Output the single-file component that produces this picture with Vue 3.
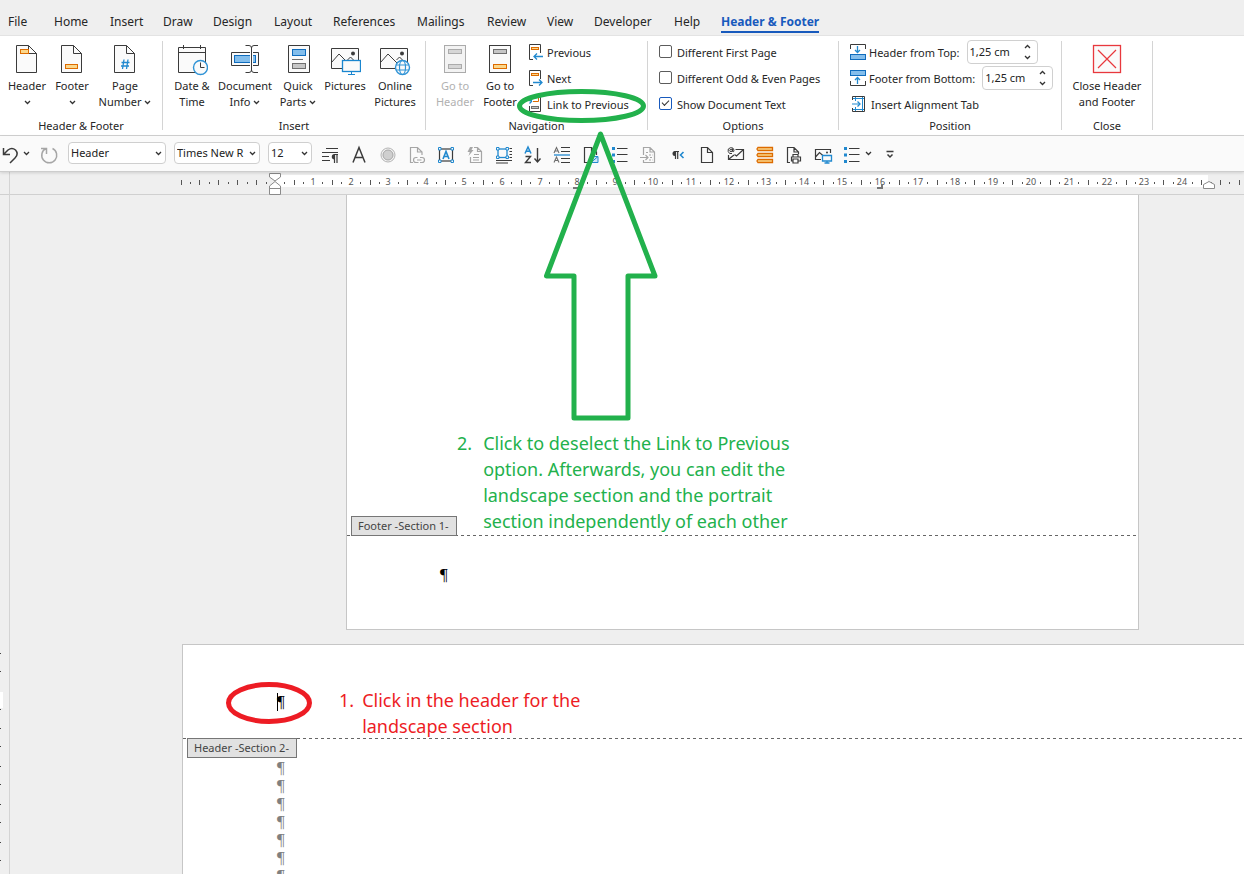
<script setup>
import { ref } from 'vue'

const tabs = [
  'File', 'Home', 'Insert', 'Draw', 'Design', 'Layout', 'References',
  'Mailings', 'Review', 'View', 'Developer', 'Help', 'Header & Footer'
]

const dark = 'fill="#fafafa" stroke="#3b3b3b"'
const none = 'fill="none"'
const blueBox = 'fill="#83beec" stroke="#0f6cbd"'
const orangeBox = 'fill="#fbd78b" stroke="#dd6b00"'
const sheet = `<path ${dark} d="M5.5 1.5H17.5L25.5 9.5V28.5H5.5Z"/><path ${none} stroke="#3b3b3b" d="M17.5 1.5V9.5H25.5"/>`
const photo = (x) => `<path ${dark} d="M${x} 4.5h27v20h-27z"/><path ${none} stroke="#3b3b3b" d="M${x} 18.5l7.5-8.5 9 9M${x + 16} 16l3-3 4 4"/><circle cx="${x + 21.5}" cy="9.5" r="2" fill="#3b3b3b"/>`
const goTo = (edge, fill, topBox, bottomBox) =>
  `<rect x="5.5" y="1.5" width="21" height="27" fill="${fill}" stroke="${edge}"/><rect x="9.5" y="5.5" width="13" height="4" ${topBox}/><rect x="9.5" y="20.5" width="13" height="4" ${bottomBox}/>`
const greyBox = 'fill="#c6c6c6" stroke="#6e6e6e"'
const paleBox = 'fill="#d6d6d6" stroke="#ababab"'

const large = {
  header: `${sheet}<rect x="9.5" y="5.5" width="8" height="4" ${orangeBox}/>`,
  footer: `${sheet}<rect x="9.5" y="20.5" width="12" height="4" ${orangeBox}/>`,
  pageNumber: `${sheet}<path ${none} stroke="#2189cf" stroke-width="1.3" d="M15 15.5L13.5 25M19 15.5L17.5 25M12.5 18.5H20.5M12 22H20"/>`,
  date: `<path ${dark} d="M2.5 3.5h27v25h-27z"/><path ${none} stroke="#3b3b3b" d="M2.5 8.5h27M7.5 1v4M24.5 1v4"/><circle cx="24.5" cy="23.5" r="7" fill="#fafafa" stroke="#2f93d6" stroke-width="1.4"/><path ${none} stroke="#3b3b3b" d="M24.5 18.5v5h4"/>`,
  docInfo: `<path ${dark} d="M2.5 8.5h27v13h-27z"/><rect x="5.5" y="11.5" width="21" height="7" ${blueBox}/><path fill="none" stroke="#fff" stroke-width="3" d="M22.5 4v22"/><path ${none} stroke="#3b3b3b" d="M16.5 1.5h3.5q2.5 0 2.5 2.5V26q0 2.5-2.5 2.5H16.5M29 1.5h-4q-2.5 0-2.5 2.5M29 28.5h-4q-2.5 0-2.5-2.5"/>`,
  quick: `<path ${dark} d="M6.5 1.5h21v27h-21z"/><rect x="10.5" y="5.5" width="13" height="6" ${blueBox}/><path ${none} stroke="#6e6e6e" d="M10 15.5h11"/><rect x="10.5" y="19.5" width="13" height="5" ${greyBox}/>`,
  pictures: `${photo(2.5)}<rect x="13.5" y="16.5" width="18" height="11" fill="#fafafa" stroke="#1a86cf" stroke-width="1.3"/><path ${none} stroke="#1a86cf" d="M22.5 27.5v3M19 30.5h7"/>`,
  online: `${photo(1.5)}<circle cx="23.5" cy="23.5" r="7" fill="#fafafa" stroke="#2f93d6" stroke-width="1.4"/><ellipse cx="23.5" cy="23.5" rx="3" ry="7" ${none} stroke="#2f93d6" stroke-width="1.2"/><path ${none} stroke="#2f93d6" stroke-width="1.2" d="M17 21h13M17 26h13"/>`,
  goHeader: goTo('#ababab', '#f3f3f3', paleBox, paleBox),
  goFooter: goTo('#3b3b3b', '#fafafa', greyBox, orangeBox),
  close: `<rect x="2.5" y="1.5" width="27" height="27" fill="#fafafa" stroke="#e8383d" stroke-width="1.3"/><path ${none} stroke="#e8383d" stroke-width="1.2" d="M7 6L25 24M25 6L7 24"/>`
}

const small = {
  previous: `<path ${none} stroke="#3b3b3b" d="M4 15.5H.5V.5H11.5V9"/><rect x="2.5" y="3.5" width="7" height="2" ${orangeBox}/><path ${none} stroke="#2189cf" stroke-width="1.3" d="M14 12.5H5M8 9.5L5 12.5L8 15.5"/>`,
  next: `<path ${none} stroke="#3b3b3b" d="M4 15.5H.5V.5H11.5V9"/><rect x="2.5" y="3.5" width="7" height="2" ${orangeBox}/><path ${none} stroke="#2189cf" stroke-width="1.3" d="M4 12.5H13M10 9.5L13 12.5L10 15.5"/>`,
  link: `<path ${none} stroke="#3b3b3b" d="M10 .5H11.5V15.5H.5V10"/><path ${none} stroke="#dd6b00" d="M9.5 2V5.5H4"/><rect x="2.5" y="10.5" width="7" height="2" ${greyBox}/><path ${none} stroke="#2189cf" stroke-width="1.3" d="M0 4.5H3M5 1.5H8M.5 7.5L3 5"/>`,
  fromTop: `<path ${none} stroke="#3b3b3b" d="M.5 5V.5H15.5V5"/><rect x=".5" y="10.5" width="15" height="5" ${blueBox}/><path ${none} stroke="#2189cf" stroke-width="1.3" d="M7.5 2V8.5M5 6L7.5 8.5L10 6"/>`,
  fromBottom: `<path ${none} stroke="#3b3b3b" d="M.5 11V15.5H15.5V11"/><rect x=".5" y=".5" width="15" height="5" ${blueBox}/><path ${none} stroke="#2189cf" stroke-width="1.3" d="M7.5 14V7.5M5 10L7.5 7.5L10 10"/>`,
  align: `<path ${none} stroke="#3b3b3b" d="M2.5 4V.5H14.5V15.5H2.5V12"/><path ${none} stroke="#2189cf" d="M5.5 1V5M5.5 11V15M12.5 1V15M3 2.5H14M3 13.5H14M2 8H10"/><path ${none} stroke="#2189cf" stroke-width="1.3" d="M7.5 5.5L10 8L7.5 10.5"/>`
}

const groupInsert = [
  { icon: 'date', lines: ['Date &', 'Time'], size: 'w44' },
  { icon: 'docInfo', lines: ['Document', 'Info'], menu: true, size: 'w62' },
  { icon: 'quick', lines: ['Quick', 'Parts'], menu: true, size: 'w44' },
  { icon: 'pictures', lines: ['Pictures'], size: 'w50' },
  { icon: 'online', lines: ['Online', 'Pictures'], size: 'w50' }
]
const groupHeader = [
  { icon: 'header', lines: ['Header', ''], menu: true, size: 'w44' },
  { icon: 'footer', lines: ['Footer', ''], menu: true, size: 'w46' },
  { icon: 'pageNumber', lines: ['Page', 'Number'], menu: true, size: 'w60' }
]
const groupNav = [
  { icon: 'goHeader', lines: ['Go to', 'Header'], size: 'w46', disabled: true },
  { icon: 'goFooter', lines: ['Go to', 'Footer'], size: 'w44' }
]
const groupClose = [{ icon: 'close', lines: ['Close Header', 'and Footer'], size: 'w90' }]

const largeGroups = { groupHeader, groupInsert, groupNav, groupClose }

const options = ref([
  { label: 'Different First Page', on: false },
  { label: 'Different Odd & Even Pages', on: false },
  { label: 'Show Document Text', on: true }
])

const fromTop = ref('1,25 cm')
const fromBottom = ref('1,25 cm')

const g = 'fill="none" stroke="#3b3b3b" stroke-width="1.2"'
const pale = 'fill="none" stroke="#a6a6a6" stroke-width="1.2"'
const blue = 'fill="none" stroke="#2189cf" stroke-width="1.3"'
const bullets = `<path fill="#2189cf" d="M2 2h3v3H2zM2 8.5h3v3H2zM2 15h3v3H2z"/><path ${g} d="M7 3.5h10.5M7 9.5h10.5M7 16.5h10.5"/>`
const quick = [
  { name: 'Paragraph marks', art: `<path ${g} d="M6 3.5h12M2 7.5h16M2 11.5h7M2 15.5h8"/><path ${g} d="M14.5 9.5H18M14.5 9V18M17 9V18"/><path fill="#3b3b3b" d="M14.5 9a2.7 2.7 0 0 0 0 5.4z"/>` },
  { name: 'Font', art: `<path fill="none" stroke="#3b3b3b" stroke-width="1.5" d="M4 17.5L10 2.5L16 17.5M6 12.5H14"/>` },
  { name: 'Record', art: `<circle cx="10" cy="10" r="7" fill="#f2f2f2" stroke="#b4b4b4"/><circle cx="10" cy="10" r="5" fill="#cfcfcf" stroke="#a6a6a6"/>` },
  { name: 'Link document', art: `<path ${pale} d="M6 17.5H3.5V2.5H10.5L15 7V10M10.5 2.5V7H15"/><path ${pale} d="M10.5 12.5H9a2.5 2.5 0 0 0 0 5H11.5M13 17.5h2a2.5 2.5 0 0 0 0-5H13M10 15h4.5"/>` },
  { name: 'Text box', art: `<rect x="3.5" y="4" width="13" height="12" ${g}/><path fill="#fafafa" stroke="#2189cf" d="M2.5 2.5h2.5v2.5H2.5zM15 2.5h2.5v2.5h-2.5zM2.5 15h2.5v2.5H2.5zM15 15h2.5v2.5h-2.5z"/><path fill="none" stroke="#2189cf" stroke-width="1.6" d="M7 14L10 6.5L13 14M8 11.5h4"/>` },
  { name: 'Quick format', art: `<path ${pale} d="M5.5 12V17.5H16.5V6.5L12.5 2.5H9M12.5 2.5V6.5H16.5M9 9.5h5M8 12.5h6M8 15h6"/><path fill="#a6a6a6" d="M5 2h3L6.5 5H8.5L3.5 11L4.8 7H2.5z"/>` },
  { name: 'Wrap text', art: `<rect x="4" y="4" width="9" height="8.5" ${blue}/><path fill="#fafafa" stroke="#2189cf" d="M2.5 2.5h2.5v2.5H2.5zM12 2.5h2.5v2.5H12zM2.5 11h2.5v2.5H2.5zM12 11h2.5v2.5H12z"/><path ${g} d="M15.5 3.5H18M15.5 6.5H18M15.5 9.5H18M15.5 12.5H18M2 15.5H18M2 18H14"/>` },
  { name: 'Sort', art: `<path fill="none" stroke="#2189cf" stroke-width="1.5" d="M2 8.5L5 2L8 8.5M3 6.3h4"/><path fill="none" stroke="#3b3b3b" stroke-width="1.4" d="M2.5 11.5H7.5L2.5 17.5H8M14.5 3V17M11.5 13.5L14.5 17L17.5 13.5"/>` },
  { name: 'Line spacing', art: `<path fill="none" stroke="#6e6e6e" stroke-width="1.1" d="M2 8L4.5 2.5L7 8M3 6h3M2 17.5L4.5 12L7 17.5M3 15.5h3"/><path ${g} d="M9 2.5h9M9 6.5h9M9 13.5h9M9 17.5h9"/><path ${blue} d="M2 10h16"/>` },
  { name: 'Document preview', art: `<path ${g} d="M9 17.5H3.5V2.5H10.5L15.5 7V10M10.5 2.5V7H15.5"/><path fill="#cfe6f8" stroke="#2189cf" d="M10 11.5h7v6h-7zM10 17.5l7-6"/>` },
  { name: 'List', art: bullets },
  { name: 'Import', art: `<path ${pale} d="M4.5 10V2.5H11L15.5 7V17.5H4.5V15M11 2.5V7H15.5M1 12.5H9M6.5 10L9 12.5L6.5 15"/><path fill="none" stroke="#a6a6a6" stroke-dasharray="2 1.5" d="M7 7.5h3M10 10h4M11 12.5h3M10 15h4"/>` },
  { name: 'Right-to-left', art: `<path fill="#3b3b3b" d="M7 6a2.5 2.5 0 0 0 0 5z"/><path ${g} d="M6.5 6.5h4.5M7.5 6V14M9.7 6V14"/><path fill="none" stroke="#2189cf" stroke-width="1.6" d="M15.5 7L12.5 10L15.5 13"/>` },
  { name: 'New', art: `<path ${g} d="M4.5 2.5H10.5L15.5 7.5V17.5H4.5ZM10.5 2.5V7.5H15.5"/>` },
  { name: 'Email', art: `<path ${g} d="M9.5 4.5H17.5V14.5H2.5V10M17.5 4.5L10.5 11L8.5 9.5M3 14L8 10"/><path fill="none" stroke="#3b3b3b" d="M6.5 3.5V6.5Q8 7.5 8 5A3 3 0 1 0 6 8.5"/><circle cx="5" cy="5.5" r="1.2" fill="none" stroke="#3b3b3b"/>` },
  { name: 'Shading', art: `<path ${orangeBox} stroke-width="1.3" d="M3 2.5h14.5v3H3l-1-1.5zM3 8.5h14.5v3H3l-1-1.5zM3 14.5h14.5v3H3l-1-1.5z"/>` },
  { name: 'Print', art: `<path ${g} d="M6 17.5H3.5V2.5H10L14.5 7V9M10 2.5V7H14.5M9 12V9.5H14V12M9 16H7.5V12H16.5V16H14M9 14H14V18H9Z"/>` },
  { name: 'Picture', art: `<path ${g} d="M8 14.5H2.5V4.5H17.5V8M2.5 12L6.5 7.5L11 11.5"/><circle cx="14" cy="7.5" r="1" fill="#3b3b3b"/><path fill="#fafafa" stroke="#2189cf" stroke-width="1.3" d="M9.5 10.5H18.5V16H9.5ZM14 16V18M11.5 18H16.5"/>` },
  { name: 'Bullets', art: bullets }
]

/* Horizontal ruler: one centimetre spans 37.8 units, zero sits at 275. */
const cm = 37.8
const zero = 275
const marks = []
for (let q = -10; q <= 102; q++) {
  const x = Math.round(zero + (q * cm) / 4)
  if (q === 0) continue
  if (q % 4 === 0 && q > 0 && q / 4 <= 24) marks.push({ x, kind: 'number', value: q / 4 })
  else if (q % 2 === 0) marks.push({ x, kind: 'line' })
  else marks.push({ x, kind: 'dot' })
}
const sideTicks = [653, 671, 709, 728, 746, 766, 784, 804, 822, 842, 860].map((y) => y - 195)
</script>

<template>
  <div class="window">
    <nav class="tabs" aria-label="Ribbon tabs">
      <button v-for="t in tabs" :key="t" type="button" :class="['tab', { active: t === 'Header & Footer' }]">{{ t }}</button>
    </nav>

    <section class="ribbon">
      <template v-for="(items, key) in largeGroups" :key="key">
        <template v-if="key === 'groupClose'">
          <div class="group options">
            <div class="body stack">
              <label v-for="o in options" :key="o.label" class="check"><input v-model="o.on" type="checkbox" />{{ o.label }}</label>
            </div>
            <div class="caption">Options</div>
          </div>
          <div class="group position">
            <div class="body stack">
              <div class="row">
                <svg class="mini" viewBox="0 0 16 16" v-html="small.fromTop"></svg>
                <label for="from-top">Header from Top:</label>
                <span class="spin">
                  <input id="from-top" v-model="fromTop" type="text" />
                  <span class="steps">
                    <button type="button" aria-label="Increase header distance"><svg viewBox="0 0 7 5"><path d="M1 4L3.5 1.5L6 4" /></svg></button>
                    <button type="button" aria-label="Decrease header distance"><svg viewBox="0 0 7 5"><path d="M1 1L3.5 3.5L6 1" /></svg></button>
                  </span>
                </span>
              </div>
              <div class="row">
                <svg class="mini" viewBox="0 0 16 16" v-html="small.fromBottom"></svg>
                <label for="from-bottom">Footer from Bottom:</label>
                <span class="spin">
                  <input id="from-bottom" v-model="fromBottom" type="text" />
                  <span class="steps">
                    <button type="button" aria-label="Increase footer distance"><svg viewBox="0 0 7 5"><path d="M1 4L3.5 1.5L6 4" /></svg></button>
                    <button type="button" aria-label="Decrease footer distance"><svg viewBox="0 0 7 5"><path d="M1 1L3.5 3.5L6 1" /></svg></button>
                  </span>
                </span>
              </div>
              <button type="button" class="row"><svg class="mini" viewBox="0 0 16 16" v-html="small.align"></svg><span class="indent">Insert Alignment Tab</span></button>
            </div>
            <div class="caption">Position</div>
          </div>
        </template>
        <div :class="['group', key]">
          <div class="body">
            <button v-for="b in items" :key="b.icon" type="button" :class="['large', b.size]" :disabled="b.disabled">
              <svg class="icon" viewBox="0 0 32 32" v-html="large[b.icon]"></svg>
              <span v-for="(line, i) in b.lines" :key="i" class="line">{{ line }}<svg v-if="b.menu && i === 1" class="chev" viewBox="0 0 7 5"><path d="M1 1L3.5 3.5L6 1" /></svg></span>
            </button>
            <div v-if="key === 'groupNav'" class="stack nav">
              <button type="button" class="row"><svg class="mini" viewBox="0 0 16 16" v-html="small.previous"></svg><span>Previous</span></button>
              <button type="button" class="row"><svg class="mini" viewBox="0 0 16 16" v-html="small.next"></svg><span>Next</span></button>
              <button type="button" class="row"><svg class="mini" viewBox="0 0 16 16" v-html="small.link"></svg><span>Link to Previous</span></button>
            </div>
          </div>
          <div class="caption">{{ { groupHeader: 'Header & Footer', groupInsert: 'Insert', groupNav: 'Navigation', groupClose: 'Close' }[key] }}</div>
        </div>
      </template>
    </section>

    <section class="quickbar">
      <button type="button" class="undo" aria-label="Undo"><svg viewBox="0 0 20 20"><path d="M3.5 3V9.5H10M3.5 9.5L8 5Q12 2 15.5 5Q19 9 15 13L10 18" /></svg></button>
      <button type="button" class="drop" aria-label="Undo history"><svg class="chev" viewBox="0 0 7 5"><path d="M1 1L3.5 3.5L6 1" /></svg></button>
      <button type="button" class="redo" aria-label="Redo"><svg viewBox="0 0 20 20"><path d="M2 3.5H7.5V9M13.5 3.5A7.5 7.5 0 1 1 7 3.5" /></svg></button>
      <span class="pick style"><select aria-label="Style"><option>Header</option></select><svg class="chev" viewBox="0 0 7 5"><path d="M1 1L3.5 3.5L6 1" /></svg></span>
      <span class="pick font"><select aria-label="Font"><option>Times New R</option></select><svg class="chev" viewBox="0 0 7 5"><path d="M1 1L3.5 3.5L6 1" /></svg></span>
      <span class="pick size"><select aria-label="Font size"><option>12</option></select><svg class="chev" viewBox="0 0 7 5"><path d="M1 1L3.5 3.5L6 1" /></svg></span>
      <button v-for="q in quick" :key="q.name" type="button" class="tool" :aria-label="q.name"><svg viewBox="0 0 20 20" v-html="q.art"></svg></button>
      <button type="button" class="drop bullets-drop" aria-label="Bullet library"><svg class="chev" viewBox="0 0 7 5"><path d="M1 1L3.5 3.5L6 1" /></svg></button>
      <button type="button" class="tool customize" aria-label="Customize toolbar"><svg viewBox="0 0 20 20"><path d="M6.5 6.5H13.5M7.5 9.5L10 12L12.5 9.5" /></svg></button>
    </section>

    <section class="ruler">
      <svg class="scale" height="23" aria-hidden="true">
        <path class="edge" d="M9.5 0V23" />
        <rect x="275" y="3" width="933" height="12" fill="#fff" />
        <template v-for="m in marks" :key="m.x">
          <text v-if="m.kind === 'number'" :x="m.x" y="13">{{ m.value }}</text>
          <rect v-else-if="m.kind === 'line'" :x="m.x" y="8" width="1" height="5" />
          <rect v-else :x="m.x" y="10" width="1" height="2" />
        </template>
        <path class="stop" d="M580 12V16H573M882 12V16H877" />
        <path class="marker" d="M269.5 1.5H280.5V5L275 9L269.5 5ZM269.5 22.5H280.5V14L275 9.5L269.5 14ZM269.5 16.5H280.5" />
        <path class="marker" d="M1203.5 16.5H1214.5V12.5L1209 9.5L1203.5 12.5Z" />
      </svg>
    </section>

    <main class="workspace">
      <div class="side">
        <svg width="9" height="679" aria-hidden="true">
          <rect x="0" y="497" width="3" height="16" fill="#fff" />
          <rect v-for="y in sideTicks" :key="y" x="0" :y="y" width="1" height="1" fill="#444" />
        </svg>
      </div>
      <div class="canvas">
        <article class="page portrait">
          <div class="footer-area">
            <span class="tag">Footer -Section 1-</span>
            <p class="mark">¶</p>
          </div>
        </article>
        <article class="page landscape">
          <div class="header-area"><p class="mark caret">¶</p></div>
          <div class="text-area">
            <span class="tag">Header -Section 2-</span>
            <p v-for="n in 7" :key="n" class="mark grey">¶</p>
          </div>
        </article>
      </div>
    </main>

    <svg class="overlay" aria-hidden="true">
      <ellipse cx="581.5" cy="106" rx="62" ry="14.5" stroke="#22b14c" />
      <path stroke="#22b14c" d="M600.5 134L546.5 276H574V418H628V276H655Z" />
      <ellipse cx="269" cy="703" rx="40.5" ry="18.5" stroke="#ed1c24" />
    </svg>
    <div class="note green">
      <span>2.</span>
      <p>Click to deselect the Link to Previous<br />option. Afterwards, you can edit the<br />landscape section and the portrait<br />section independently of each other</p>
    </div>
    <div class="note red">
      <span>1.</span>
      <p>Click in the header for the<br />landscape section</p>
    </div>
  </div>
</template>

<style>
body {
  margin: 0;
}
</style>

<style scoped>
.window {
  position: relative;
  display: flex;
  flex-direction: column;
  height: 100vh;
  overflow: hidden;
  background: #efefef;
  color: #262626;
  font: 11px/16px "Noto Sans", "Open Sans", sans-serif;
}
button {
  padding: 0;
  border: 0;
  background: none;
  color: inherit;
  font: inherit;
  white-space: nowrap;
}
svg {
  display: block;
  flex: none;
}
p {
  margin: 0;
}
.tabs {
  display: grid;
  grid-template-columns: 46px 56px 53px 50px 61px 59px 84px 70px 60px 47px 80px 47px max-content;
  height: 35px;
  padding-left: 8px;
  border-bottom: 1px solid #e3e3e3;
  font-size: 12px;
}
.tab {
  justify-self: start;
  height: 20px;
  margin-top: 12px;
}
.tab.active {
  color: #185abd;
  font-weight: 700;
  border-bottom: 2px solid #185abd;
  height: 21px;
}
.ribbon {
  display: flex;
  height: 99px;
  background: #fff;
  border-bottom: 1px solid #d2d2d2;
}
.group {
  position: relative;
  display: flex;
  flex-direction: column;
  box-sizing: border-box;
  padding-top: 3px;
}
.group::after {
  content: "";
  position: absolute;
  right: 0;
  top: 5px;
  bottom: 5px;
  width: 1px;
  background: #d4d4d4;
}
.groupHeader { width: 163px; }
.groupInsert { width: 263px; }
.groupNav { width: 222px; }
.options { width: 191px; }
.position { width: 223px; }
.groupClose { width: 91px; }
.groupHeader .body { padding-left: 5px; }
.groupInsert .body { padding-left: 7px; }
.groupNav .body { padding-left: 6px; }
.options .body { padding-left: 11px; }
.position .body { padding-left: 11px; }
.body {
  display: flex;
  height: 78px;
}
.caption {
  height: 18px;
  line-height: 18px;
  padding-right: 1px;
  text-align: center;
}
.large {
  display: flex;
  flex-direction: column;
  align-items: center;
  padding-top: 5px;
}
.large:disabled { color: #b1b1b1; }
.icon {
  width: 32px;
  height: 32px;
  margin-bottom: 2px;
}
.line {
  display: flex;
  align-items: center;
  justify-content: center;
  gap: 3px;
  height: 16px;
}
.w44 { width: 44px; }
.w46 { width: 46px; }
.w50 { width: 50px; }
.w60 { width: 60px; }
.w62 { width: 62px; }
.w90 { width: 90px; }
.chev {
  width: 7px;
  height: 5px;
}
.chev path,
.steps path {
  fill: none;
  stroke: #333;
  stroke-width: 1.3;
}
.stack {
  display: flex;
  flex-direction: column;
}
.nav { padding-left: 7px; }
.row,
.check {
  display: flex;
  align-items: center;
  height: 26px;
  white-space: nowrap;
}
.mini {
  width: 16px;
  height: 16px;
  margin-right: 2px;
}
.row label,
.row > span:not(.spin) { padding-top: 2px; }
.row label { margin-left: 1px; }
.row .indent { margin-left: 3px; }
.check {
  box-sizing: border-box;
  padding-top: 2px;
}
.check input {
  appearance: none;
  display: grid;
  place-items: center;
  box-sizing: border-box;
  width: 13px;
  height: 13px;
  margin: 0 5px 4px 0;
  border: 1px solid #5c5c5c;
  border-radius: 2px;
  background: #fff;
}
.check input:checked { border-color: #185abd; }
.check input:checked::before {
  content: "";
  width: 6px;
  height: 3px;
  margin-bottom: 2px;
  border: solid #333;
  border-width: 0 0 1px 1px;
  transform: rotate(-45deg);
}
.spin {
  display: flex;
  box-sizing: border-box;
  width: 71px;
  height: 24px;
  margin-left: 7px;
  border: 1px solid #d0d0d0;
  border-radius: 4px;
  background: #fff;
}
.spin input {
  box-sizing: border-box;
  width: 56px;
  padding: 0 0 0 2px;
  border: 0;
  background: none;
  color: #222;
  font: inherit;
}
.steps {
  display: flex;
  flex-direction: column;
  justify-content: center;
  gap: 6px;
}
.steps button,
.steps svg {
  display: block;
  width: 7px;
  height: 5px;
}
.quickbar {
  display: flex;
  align-items: center;
  height: 35px;
  background: #fafafa;
  border-bottom: 1px solid #cdcdcd;
  box-shadow: 0 1px 3px #0002;
  z-index: 1;
}
.quickbar button svg:not(.chev) {
  width: 20px;
  height: 20px;
}
.undo path,
.redo path,
.customize path {
  fill: none;
  stroke: #3b3b3b;
  stroke-width: 1.5;
}
.redo path { stroke: #a6a6a6; }
.undo { padding-top: 2px; }
.drop {
  display: flex;
  justify-content: center;
  width: 13px;
}
.redo { padding: 2px 9px 0 6px; }
.pick {
  position: relative;
  height: 22px;
  margin: 0 8px 2px 0;
}
.pick select {
  appearance: none;
  display: block;
  box-sizing: border-box;
  width: 100%;
  height: 100%;
  padding: 0 12px 0 2px;
  border: 1px solid #cfcfcf;
  border-radius: 4px;
  background: #fff;
  color: #222;
  font: inherit;
}
.pick .chev {
  position: absolute;
  right: 4px;
  top: 9px;
}
.style { width: 98px; }
.font { width: 86px; }
.size { width: 44px; margin-right: 3px; }
.tool {
  display: flex;
  justify-content: center;
  width: 29px;
  padding-top: 2px;
}
.bullets-drop { width: 5px; }
.customize { margin-left: 4px; }
.ruler {
  height: 22px;
  border-bottom: 1px solid #d0d0d0;
}
.scale {
  width: 100%;
  overflow: hidden;
}
.scale rect { fill: #555; }
.scale rect[fill] { fill: #fff; }
.scale text {
  fill: #555;
  font-size: 9px;
  text-anchor: middle;
}
.edge {
  fill: none;
  stroke: #d4d4d4;
}
.stop {
  fill: none;
  stroke: #777;
  stroke-width: 2;
}
.marker {
  fill: #fff;
  stroke: #8a8a8a;
}
.workspace {
  display: flex;
  flex: 1;
  min-height: 0;
}
.side {
  flex: none;
  width: 9px;
  border-right: 1px solid #d4d4d4;
  overflow: hidden;
}
.canvas {
  display: flex;
  flex: 1;
  flex-direction: column;
  align-items: flex-start;
  gap: 14px;
  padding-left: 172px;
  min-width: 0;
  overflow: hidden;
}
.page {
  flex: none;
  box-sizing: border-box;
  background: #fff;
  border: 1px solid #c6c6c6;
}
.portrait {
  width: 793px;
  margin-left: 164px;
  padding-top: 340px;
  border-top: 0;
}
.landscape { width: 1123px; }
.footer-area {
  position: relative;
  height: 94px;
}
.footer-area::before,
.text-area::before {
  content: "";
  position: absolute;
  inset: 0 0 auto;
  height: 1px;
  background: repeating-linear-gradient(90deg, #666 0 3px, transparent 3px 6px);
}
.tag {
  position: absolute;
  left: 4px;
  box-sizing: border-box;
  height: 20px;
  padding: 0 7px 0 6px;
  border: 1px solid #767676;
  background: #e1e1e1;
  color: #444;
  line-height: 18px;
  white-space: nowrap;
}
.footer-area .tag { bottom: 93px; }
.text-area .tag { top: 0; }
.mark {
  height: 18px;
  color: #000;
  font: 17px/18px "Liberation Serif", serif;
}
.footer-area .mark { padding: 31px 0 0 93px; }
.header-area {
  height: 45px;
  padding: 48px 0 0 94px;
}
.caret {
  width: 12px;
  box-shadow: inset 1px 0 #000;
}
.text-area {
  position: relative;
  padding: 21px 0 0 94px;
}
.mark.grey { color: #808080; }
.overlay {
  position: absolute;
  inset: 0;
  width: 100%;
  height: 100%;
  z-index: 2;
  fill: none;
  stroke-width: 5;
  stroke-linejoin: round;
  pointer-events: none;
}
.note {
  position: absolute;
  z-index: 2;
  display: flex;
  font: 18px/26px "Noto Sans", "Open Sans", sans-serif;
  white-space: nowrap;
}
.green {
  left: 457px;
  top: 430px;
  gap: 11px;
  color: #22b14c;
}
.red {
  left: 339px;
  top: 687px;
  gap: 8px;
  color: #ed1c24;
}
</style>
